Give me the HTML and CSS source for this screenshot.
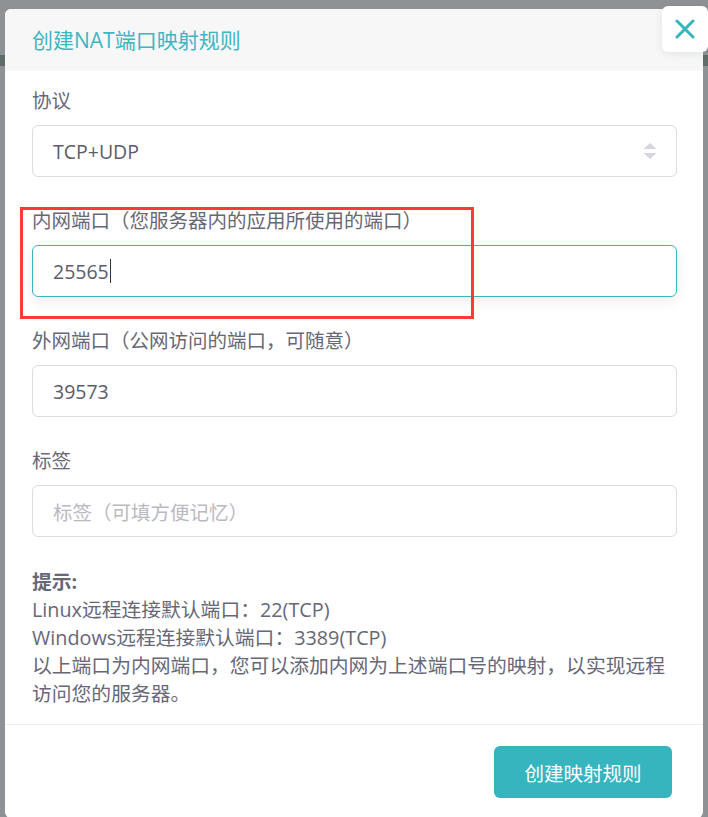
FILE: index.html
```html
<!DOCTYPE html>
<html lang="zh-CN">
<head>
<meta charset="utf-8">
<title>创建NAT端口映射规则</title>
<link rel="stylesheet" href="styles.css">
</head>
<body>
<div class="backdrop">
  <div class="modal">
    <div class="modal-header">
      <h2 class="modal-title">创建NAT端口映射规则</h2>
    </div>
    <button class="close-btn" aria-label="关闭">
      <svg width="20" height="20" viewBox="0 0 20 20"><path d="M2 2 L18 18 M18 2 L2 18" stroke="#36b5bf" stroke-width="3" stroke-linecap="round" fill="none"/></svg>
    </button>
    <div class="modal-body">
      <div class="field">
        <div class="label">协议</div>
        <div class="input select">
          <span>TCP+UDP</span>
          <svg class="select-arrow" width="14" height="16" viewBox="0 0 14 16"><path d="M7 0 L13.5 6 L0.5 6 Z M7 16 L13.5 10 L0.5 10 Z" fill="#d6d6de"/></svg>
        </div>
      </div>
      <div class="field highlight">
        <div class="label">内网端口（您服务器内的应用所使用的端口）</div>
        <div class="input focused"><span>25565</span><span class="caret"></span></div>
        <div class="annotation"></div>
      </div>
      <div class="field">
        <div class="label">外网端口（公网访问的端口，可随意）</div>
        <div class="input"><span>39573</span></div>
      </div>
      <div class="field">
        <div class="label">标签</div>
        <div class="input"><span class="placeholder">标签（可填方便记忆）</span></div>
      </div>
      <div class="tips">
        <div class="tips-title">提示:</div>
        <div>Linux远程连接默认端口：22(TCP)</div>
        <div>Windows远程连接默认端口：3389(TCP)</div>
        <div>以上端口为内网端口，您可以添加内网为上述端口号的映射，以实现远程<br>访问您的服务器。</div>
      </div>
    </div>
    <div class="modal-footer">
      <button class="primary-btn">创建映射规则</button>
    </div>
  </div>
</div>
</body>
</html>
```
FILE: styles.css
```css
html, body {
  margin: 0;
  padding: 0;
}
body {
  width: 708px;
  height: 817px;
  overflow: hidden;
  background: #8e9295;
  font-family: "Open Sans", "Noto Sans CJK SC", sans-serif;
}
.backdrop {
  height: 817px;
  padding-top: 9px;
  box-sizing: border-box;
  background: linear-gradient(to bottom, #8e9295 0, #8e9295 55px, #5f6d68 55px, #5f6d68 66px, #8e9295 66px);
}
.modal {
  position: relative;
  margin-left: 5px;
  width: 698px;
  background: #ffffff;
  border-radius: 6px;
  padding-bottom: 20px;
}
.modal-header {
  height: 62px;
  background: #f7f7f8;
  border-radius: 6px 6px 0 0;
  display: flex;
  align-items: center;
  padding-left: 27px;
}
.modal-title {
  margin: 0;
  font-weight: 400;
  font-size: 21px;
  color: #3db6c2;
  line-height: 28px;
}
.close-btn {
  position: absolute;
  top: -3px;
  left: 657px;
  width: 46px;
  height: 46px;
  border: none;
  padding: 0;
  background: #ffffff;
  border-radius: 6px;
  box-shadow: 0 2px 10px rgba(0, 0, 0, 0.08);
  display: flex;
  align-items: center;
  justify-content: center;
}
.modal-body {
  padding: 16px 26px 16px 27px;
}
.field {
  position: relative;
}
.field + .field {
  margin-top: 30px;
}
.label {
  font-size: 19.5px;
  line-height: 28px;
  color: #676777;
  margin-bottom: 10px;
}
.input {
  height: 52px;
  box-sizing: border-box;
  border: 1px solid #dcdce2;
  border-radius: 6px;
  padding: 0 20px;
  display: flex;
  align-items: center;
  font-size: 19.5px;
  color: #5c5c6c;
}
.select {
  justify-content: space-between;
  padding-right: 19px;
}
.focused {
  border-color: #3ab6c2;
  box-shadow: 0 4px 14px rgba(0, 0, 0, 0.08);
}
.caret {
  display: inline-block;
  width: 1px;
  height: 24px;
  background: #333340;
  margin-left: 1px;
}
.placeholder {
  color: #b9b9c2;
}
.annotation {
  position: absolute;
  left: -12px;
  top: 0;
  width: 448px;
  height: 106px;
  border: 3px solid #ff3838;
  pointer-events: none;
}
.tips {
  margin-top: 31px;
  font-size: 19.8px;
  line-height: 28px;
  color: #676777;
}
.tips-title {
  font-weight: 700;
}
.modal-footer {
  border-top: 1px solid #efefef;
  padding: 21px 31px 0 0;
  display: flex;
  justify-content: flex-end;
}
.primary-btn {
  width: 178px;
  height: 52px;
  border: none;
  border-radius: 6px;
  background: #36b5bf;
  color: #ffffff;
  font-family: "Open Sans", "Noto Sans CJK SC", sans-serif;
  font-size: 19.5px;
}
```
